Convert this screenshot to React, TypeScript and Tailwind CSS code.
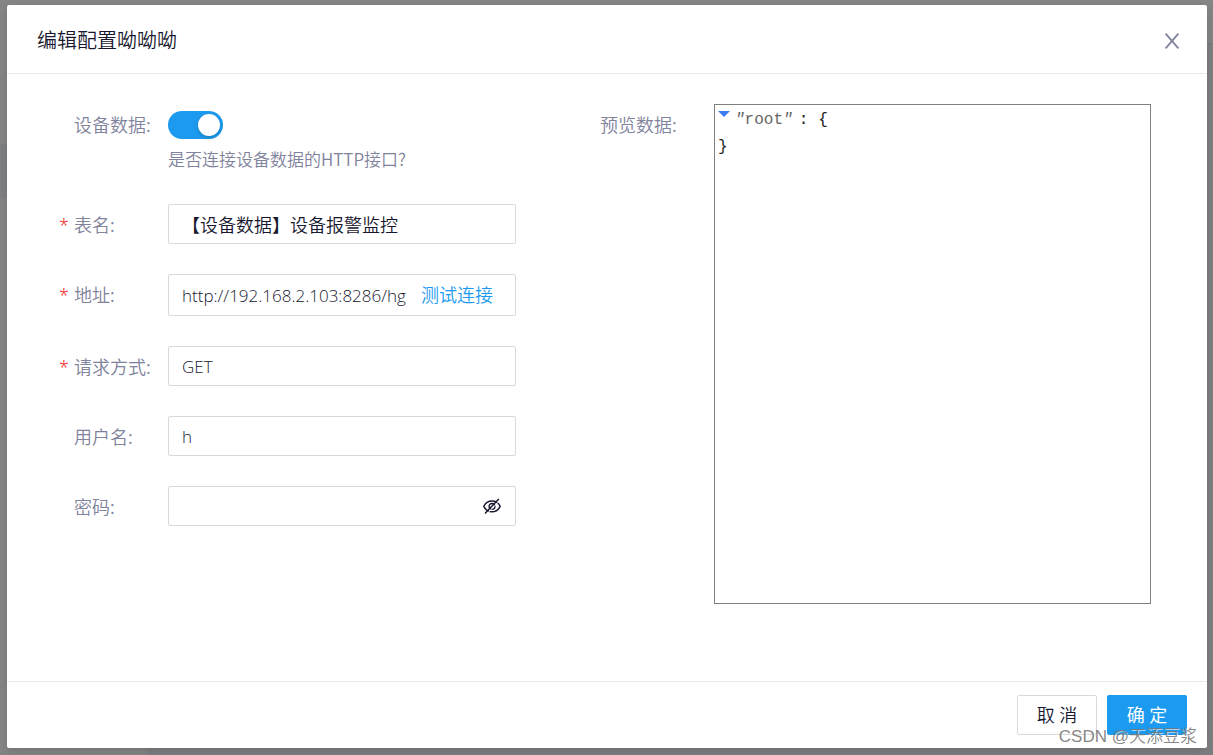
import React, { useState } from 'react';

const fieldClass =
  'block w-full h-10 px-[13px] bg-white border border-[#d9d9d9] rounded-xs text-[#17172f] outline-none focus:border-[#1c9aef]';

interface FormRowProps {
  id: string;
  label: string;
  required?: boolean;
  children: React.ReactNode;
}

function FormRow({ id, label, required, children }: FormRowProps) {
  return (
    <div className="flex items-start">
      <label htmlFor={id} className="w-[109px] h-10 pt-px shrink-0 flex items-center text-lg text-[#7f839c]">
        <span className="w-[15px] shrink-0 text-[#f00000]" aria-hidden="true">
          {required ? '*' : ''}
        </span>
        {label}
        <span className="font-normal">:</span>
      </label>
      <div className="flex-1 min-w-0">{children}</div>
    </div>
  );
}

function EyeInvisibleIcon() {
  return (
    <svg viewBox="0 0 20 18" className="w-5 h-[18px]" fill="none" stroke="currentColor" strokeWidth="1.4">
      <path d="M1.8 9.4C3.6 5.6 6.4 4 10 4S16.4 5.6 18.2 9.4C16.4 13.2 13.6 14.8 10 14.8S3.6 13.2 1.8 9.4Z" />
      <circle cx="10" cy="9.4" r="2.9" />
      <path d="M4.4 17.4 18.2 3" stroke="#fff" strokeWidth="1" />
      <path d="M3 16.4 16.8 2" />
    </svg>
  );
}

export default function App() {
  const [enabled, setEnabled] = useState(true);
  const [tableName, setTableName] = useState('【设备数据】设备报警监控');
  const [url, setUrl] = useState('http://192.168.2.103:8286/hg');
  const [method, setMethod] = useState('GET');
  const [username, setUsername] = useState('h');
  const [password, setPassword] = useState('');
  const [showPassword, setShowPassword] = useState(false);
  const [expanded, setExpanded] = useState(true);

  return (
    <div className="relative min-h-screen flex bg-[#868686] pt-[5px] pr-1.5 pb-[7px] pl-[7px] font-['Open_Sans','Noto_Sans_CJK_SC',sans-serif] font-[350] text-[17px]">
      {/* Dimmed page behind the dialog */}
      <div className="absolute inset-0 flex" aria-hidden="true">
        <div className="w-[147px] flex flex-col bg-[#868686]">
          <div className="h-36" />
          <div className="h-[54px] bg-[#7f8184]" />
        </div>
        <div className="flex-1 flex flex-col">
          <div className="h-11 bg-[#868686] border-b border-[#787878]" />
          <div className="flex-1 bg-[#7f8083]" />
        </div>
      </div>

      <div
        role="dialog"
        aria-labelledby="dialog-title"
        className="relative flex-1 flex flex-col bg-white rounded-xs shadow-[0_4px_12px_rgba(0,0,0,0.15)]"
      >
        <header className="h-[69px] pt-1 pl-[30px] pr-[26px] flex items-center justify-between border-b border-[#ebebeb]">
          <h1 id="dialog-title" className="text-xl font-[350] text-[#17172f]">编辑配置呦呦呦</h1>
          <button type="button" aria-label="关闭" className="w-[18px] h-[18px] text-[#7f839c] cursor-pointer">
            <svg viewBox="0 0 18 18" className="w-[18px] h-[18px]" fill="none" stroke="currentColor" strokeWidth="1.8">
              <path d="M2.6 1.6 15.4 16.4M15.4 1.6 2.6 16.4" />
            </svg>
          </button>
        </header>

        <div className="flex-1 pt-[30px] pr-14 pb-[77px] pl-[52px] grid grid-cols-[457fr_551fr] gap-x-[84px]">
          <form className="flex flex-col gap-[30px]">
            <FormRow id="enabled" label="设备数据">
              <div className="pt-[7px] pb-px">
                <input
                  id="enabled"
                  type="checkbox"
                  role="switch"
                  checked={enabled}
                  onChange={(e) => setEnabled(e.target.checked)}
                  className="appearance-none flex items-center w-[55px] h-7 px-[3px] rounded-full bg-[#bfbfbf] checked:bg-[#1c9aef] checked:justify-end cursor-pointer before:block before:w-[22px] before:h-[22px] before:rounded-full before:bg-white before:shadow-[0_2px_4px_rgba(0,35,11,0.2)]"
                />
                <p className="mt-1.5 leading-7 text-[#7f839c] font-['Noto_Sans_CJK_SC',sans-serif]">
                  是否连接设备数据的HTTP接口?
                </p>
              </div>
            </FormRow>

            <FormRow id="tableName" label="表名" required>
              <input
                id="tableName"
                type="text"
                value={tableName}
                onChange={(e) => setTableName(e.target.value)}
                className={`${fieldClass} text-lg font-['Noto_Sans_CJK_SC',sans-serif]`}
              />
            </FormRow>

            <FormRow id="url" label="地址" required>
              <div className="flex items-center h-[42px] pl-[13px] pr-[22px] border border-[#d9d9d9] rounded-xs">
                <input
                  id="url"
                  type="text"
                  value={url}
                  onChange={(e) => setUrl(e.target.value)}
                  className="flex-1 min-w-0 h-full text-[#17172f] outline-none"
                />
                <button type="button" className="ml-3 shrink-0 text-lg text-[#1c9aef] cursor-pointer">
                  测试连接
                </button>
              </div>
            </FormRow>

            <FormRow id="method" label="请求方式" required>
              <select
                id="method"
                value={method}
                onChange={(e) => setMethod(e.target.value)}
                className={`${fieldClass} appearance-none pt-0.5`}
              >
                <option>GET</option>
                <option>POST</option>
              </select>
            </FormRow>

            <FormRow id="username" label="用户名">
              <input
                id="username"
                type="text"
                value={username}
                onChange={(e) => setUsername(e.target.value)}
                className={fieldClass}
              />
            </FormRow>

            <FormRow id="password" label="密码">
              <div className="flex items-center h-10 px-[13px] border border-[#d9d9d9] rounded-xs">
                <input
                  id="password"
                  type={showPassword ? 'text' : 'password'}
                  value={password}
                  onChange={(e) => setPassword(e.target.value)}
                  className="flex-1 min-w-0 h-full text-[#17172f] outline-none"
                />
                <button
                  type="button"
                  aria-label="显示密码"
                  onClick={() => setShowPassword(!showPassword)}
                  className="shrink-0 text-[#17172f] cursor-pointer"
                >
                  <EyeInvisibleIcon />
                </button>
              </div>
            </FormRow>
          </form>

          <section className="flex items-start">
            <h2 className="w-[114px] h-10 pt-px shrink-0 flex items-center text-lg font-[350] text-[#7f839c]">
              预览数据<span className="font-normal">:</span>
            </h2>
            <div className="flex-1 h-[500px] pt-0.5 pl-[3px] border border-[#808080] font-['Liberation_Mono',monospace] font-normal text-base leading-[27px] text-[#222]">
              <div className="flex">
                <button
                  type="button"
                  aria-label="展开"
                  onClick={() => setExpanded(!expanded)}
                  className="w-[17px] pt-1 self-start cursor-pointer"
                >
                  <svg viewBox="0 0 12 6" className="w-3 h-1.5" fill="#3b7df0">
                    <path d="M0 0H12L6 6Z" />
                  </svg>
                </button>
                <span className="text-[#666]">
                  <i>"</i>root<i>"</i>
                </span>
                <span className="ml-1.5">:</span>
                <span className="ml-2.5">{'{'}</span>
              </div>
              {expanded && <div>{'}'}</div>}
            </div>
          </section>
        </div>

        <footer className="h-[67px] pr-5 pt-[13px] flex justify-end items-start gap-2.5 border-t border-[#ebebeb]">
          <button
            type="button"
            className="w-20 h-10 rounded-xs border border-[#d9d9d9] bg-white text-lg text-[#17172f] cursor-pointer"
          >
            取 消
          </button>
          <button type="button" className="w-20 h-10 rounded-xs bg-[#1c9aef] text-lg font-normal text-white cursor-pointer">
            确 定
          </button>
        </footer>
      </div>

      <span className="absolute right-4 bottom-1.5 leading-6 text-[17px] text-[#777]/90 [text-shadow:1px_1px_0_#ffffff99] pointer-events-none font-['Liberation_Sans','Noto_Sans_CJK_SC',sans-serif]">
        CSDN @天添豆浆
      </span>
    </div>
  );
}
